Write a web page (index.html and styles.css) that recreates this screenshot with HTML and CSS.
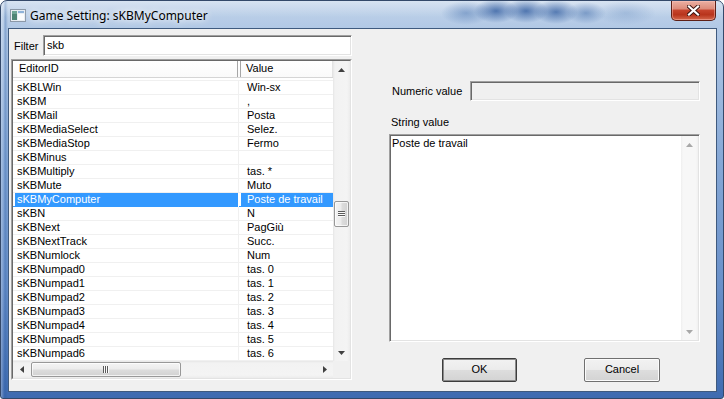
FILE: index.html
```html
<!DOCTYPE html>
<html>
<head>
<meta charset="utf-8">
<link rel="stylesheet" href="styles.css">
</head>
<body>
<div class="window">
  <div class="titlebar">
    <svg class="appicon" width="16" height="13" viewBox="0 0 16 13">
      <rect x="0.5" y="0.5" width="15" height="12" fill="#e8edf3" stroke="#8b98a8"/>
      <rect x="2" y="2" width="5" height="9" fill="#4f8576"/>
      <rect x="2" y="2" width="5" height="3" fill="#6fa596"/>
      <rect x="8" y="2" width="6" height="2" fill="#8fb3d9"/>
      <rect x="8" y="5" width="6" height="6" fill="#fbfcfd"/>
    </svg>
    <span class="title">Game Setting: sKBMyComputer</span>
    <div class="close">
      <svg width="13" height="11" viewBox="0 0 13 11">
        <path d="M2 1.5 L11 9.5 M11 1.5 L2 9.5" stroke="#3a1410" stroke-width="4" stroke-linecap="square" fill="none"/>
        <path d="M2 1.5 L11 9.5 M11 1.5 L2 9.5" stroke="#ffffff" stroke-width="2.2" stroke-linecap="square" fill="none"/>
      </svg>
    </div>
  </div>
  <div class="frame-body">
    <div class="client">
      <div class="left">
        <div class="filter-row">
          <span class="filter-label">Filter</span>
          <div class="field">skb</div>
        </div>
        <div class="list">
          <div class="list-inner">
            <div class="list-main">
              <div class="header">
                <div class="hcell h1">EditorID</div>
                <div class="hcell h2">Value</div>
              </div>
              <div class="rows">
                <div class="row"><div class="c1">sKBLWin</div><div class="sep"></div><div class="c2">Win-sx</div></div>
                <div class="row"><div class="c1">sKBM</div><div class="sep"></div><div class="c2">,</div></div>
                <div class="row"><div class="c1">sKBMail</div><div class="sep"></div><div class="c2">Posta</div></div>
                <div class="row"><div class="c1">sKBMediaSelect</div><div class="sep"></div><div class="c2">Selez.</div></div>
                <div class="row"><div class="c1">sKBMediaStop</div><div class="sep"></div><div class="c2">Fermo</div></div>
                <div class="row"><div class="c1">sKBMinus</div><div class="sep"></div><div class="c2"></div></div>
                <div class="row"><div class="c1">sKBMultiply</div><div class="sep"></div><div class="c2">tas. *</div></div>
                <div class="row"><div class="c1">sKBMute</div><div class="sep"></div><div class="c2">Muto</div></div>
                <div class="row selected"><div class="c1">sKBMyComputer</div><div class="sep"></div><div class="c2">Poste de travail</div></div>
                <div class="row"><div class="c1">sKBN</div><div class="sep"></div><div class="c2">N</div></div>
                <div class="row"><div class="c1">sKBNext</div><div class="sep"></div><div class="c2">PagGiù</div></div>
                <div class="row"><div class="c1">sKBNextTrack</div><div class="sep"></div><div class="c2">Succ.</div></div>
                <div class="row"><div class="c1">sKBNumlock</div><div class="sep"></div><div class="c2">Num</div></div>
                <div class="row"><div class="c1">sKBNumpad0</div><div class="sep"></div><div class="c2">tas. 0</div></div>
                <div class="row"><div class="c1">sKBNumpad1</div><div class="sep"></div><div class="c2">tas. 1</div></div>
                <div class="row"><div class="c1">sKBNumpad2</div><div class="sep"></div><div class="c2">tas. 2</div></div>
                <div class="row"><div class="c1">sKBNumpad3</div><div class="sep"></div><div class="c2">tas. 3</div></div>
                <div class="row"><div class="c1">sKBNumpad4</div><div class="sep"></div><div class="c2">tas. 4</div></div>
                <div class="row"><div class="c1">sKBNumpad5</div><div class="sep"></div><div class="c2">tas. 5</div></div>
                <div class="row"><div class="c1">sKBNumpad6</div><div class="sep"></div><div class="c2">tas. 6</div></div>
              </div>
            </div>
            <div class="vscroll">
              <div class="sbtn"><svg width="7" height="4" viewBox="0 0 7 4"><polygon points="0,4 3.5,0 7,4" fill="#404040"/></svg></div>
              <div class="vspace"></div>
              <div class="vthumb">
                <svg width="7" height="6" viewBox="0 0 7 6">
                  <rect x="0" y="0" width="7" height="1" fill="#5a5a5a"/><rect x="0" y="1" width="7" height="1" fill="#fafafa"/>
                  <rect x="0" y="2" width="7" height="1" fill="#5a5a5a"/><rect x="0" y="3" width="7" height="1" fill="#fafafa"/>
                  <rect x="0" y="4" width="7" height="1" fill="#5a5a5a"/><rect x="0" y="5" width="7" height="1" fill="#fafafa"/>
                </svg>
              </div>
              <div class="vfill"></div>
              <div class="sbtn"><svg width="7" height="4" viewBox="0 0 7 4"><polygon points="0,0 7,0 3.5,4" fill="#404040"/></svg></div>
            </div>
            <div class="hscroll">
              <div class="sbtn"><svg width="4" height="7" viewBox="0 0 4 7"><polygon points="4,0 4,7 0,3.5" fill="#404040"/></svg></div>
              <div class="hthumb">
                <svg width="6" height="7" viewBox="0 0 6 7">
                  <rect x="0" y="0" width="1" height="7" fill="#5a5a5a"/><rect x="1" y="0" width="1" height="7" fill="#fafafa"/>
                  <rect x="2" y="0" width="1" height="7" fill="#5a5a5a"/><rect x="3" y="0" width="1" height="7" fill="#fafafa"/>
                  <rect x="4" y="0" width="1" height="7" fill="#5a5a5a"/><rect x="5" y="0" width="1" height="7" fill="#fafafa"/>
                </svg>
              </div>
              <div class="hfill"></div>
              <div class="sbtn"><svg width="4" height="7" viewBox="0 0 4 7"><polygon points="0,0 4,3.5 0,7" fill="#404040"/></svg></div>
            </div>
            <div class="corner"></div>
          </div>
        </div>
      </div>
      <div class="right">
        <div class="num-row">
          <span class="num-label">Numeric value</span>
          <div class="field disabled"></div>
        </div>
        <div class="str-label">String value</div>
        <div class="textarea">
          <div class="ta-text">Poste de travail</div>
          <div class="ta-scroll">
            <div class="sbtn"><svg width="7" height="4" viewBox="0 0 7 4"><polygon points="0,4 3.5,0 7,4" fill="#a8a8a8"/></svg></div>
            <div class="vfill"></div>
            <div class="sbtn"><svg width="7" height="4" viewBox="0 0 7 4"><polygon points="0,0 7,0 3.5,4" fill="#a8a8a8"/></svg></div>
          </div>
        </div>
        <div class="buttons">
          <div class="btn ok">OK</div>
          <div class="btn cancel">Cancel</div>
        </div>
      </div>
    </div>
  </div>
</div>
</body>
</html>
```

FILE: styles.css
```css
html, body {
  margin: 0;
  padding: 0;
}
body {
  width: 724px;
  height: 399px;
  overflow: hidden;
  background: #ffffff;
  font-family: "Liberation Sans", Arial, sans-serif;
  font-size: 11px;
  color: #000;
}
.window {
  box-sizing: border-box;
  width: 724px;
  height: 399px;
  border: 1px solid #34496a;
  border-radius: 7px 7px 3px 3px;
  overflow: hidden;
  display: flex;
  flex-direction: column;
  background:
    linear-gradient(to right, rgba(255,255,255,0.3), rgba(255,255,255,0) 3px, rgba(40,90,160,0.35) 4px, rgba(40,90,160,0) 7px),
    linear-gradient(to bottom, #c2d4ea 0px, #b1c8e5 28px, #86a8d6 40%, #6990c9 72%, #3f6bb0 100%);
}
.titlebar {
  height: 27px;
  flex: none;
  display: flex;
  align-items: flex-start;
  padding: 0 7px 0 9px;
  background:
    radial-gradient(ellipse 22px 12px at 495px 10px, rgba(40,85,155,0.75), rgba(40,85,155,0)),
    radial-gradient(ellipse 22px 12px at 525px 10px, rgba(40,85,155,0.75), rgba(40,85,155,0)),
    radial-gradient(ellipse 22px 12px at 555px 11px, rgba(40,85,155,0.7), rgba(40,85,155,0)),
    radial-gradient(ellipse 20px 11px at 585px 12px, rgba(55,100,165,0.5), rgba(55,100,165,0)),
    radial-gradient(ellipse 25px 12px at 465px 12px, rgba(60,105,170,0.45), rgba(60,105,170,0)),
    radial-gradient(ellipse 30px 12px at 625px 12px, rgba(90,130,185,0.3), rgba(90,130,185,0)),
    linear-gradient(to bottom, rgba(255,255,255,0.35), rgba(255,255,255,0) 60%);
}
.appicon {
  margin-top: 8px;
  flex: none;
}
.title {
  margin-left: 4px;
  margin-top: 6px;
  font-family: "Noto Sans", "Open Sans", sans-serif;
  font-size: 12px;
  line-height: 17px;
  color: #000;
  text-shadow: 0 0 6px #fff, 0 0 10px rgba(255,255,255,0.9);
}
.close {
  margin-left: auto;
  width: 45px;
  height: 20px;
  box-sizing: border-box;
  border: 1px solid #5d1f16;
  border-top: none;
  border-radius: 0 0 5px 5px;
  background: linear-gradient(to bottom, #ebb0a3 0%, #dd8c7b 40%, #c5432c 50%, #b8341c 72%, #d4674c 100%);
  box-shadow: inset 0 0 0 1px rgba(255,200,190,0.45);
  display: flex;
  align-items: center;
  justify-content: center;
}
.frame-body {
  flex: 1;
  display: flex;
  padding: 0 6px 6px 7px;
}
.client {
  flex: 1;
  display: flex;
  border: 1px solid #3f5a7e;
  background: #f0f0f0;
}
.left {
  width: 341px;
  margin-left: 2px;
  padding-top: 6px;
  display: flex;
  flex-direction: column;
}
.filter-row {
  display: flex;
  align-items: center;
  height: 21px;
}
.filter-label {
  width: 29px;
  padding-left: 3px;
}
.field {
  box-sizing: border-box;
  flex: 1;
  height: 21px;
  background: #fff;
  border: 1px solid;
  border-color: #a0a0a0 #ffffff #ffffff #a0a0a0;
  box-shadow: inset 1px 1px 0 #696969, inset -1px -1px 0 #e3e3e3;
  padding: 3px 0 0 3px;
  line-height: 13px;
}
.field.disabled {
  background: #f0f0f0;
  height: 20px;
}
.list {
  margin-top: 3px;
  box-sizing: border-box;
  height: 321px;
  border: 1px solid;
  border-color: #a0a0a0 #ffffff #ffffff #a0a0a0;
}
.list-inner {
  box-sizing: border-box;
  height: 100%;
  border: 1px solid;
  border-color: #696969 #e3e3e3 #e3e3e3 #696969;
  background: #fff;
  display: grid;
  grid-template-columns: 320px 17px;
  grid-template-rows: 300px 17px;
}
.list-main {
  overflow: hidden;
  background: #fff;
}
.header {
  display: flex;
  height: 17px;
  box-sizing: border-box;
  border-bottom: 1px solid #d5d5d5;
  background: linear-gradient(#ffffff, #fafafa);
}
.hcell {
  box-sizing: border-box;
  height: 16px;
  line-height: 15px;
}
.h1 {
  width: 225px;
  padding-left: 6px;
  border-right: 1px solid #a6a6a6;
}
.h2 {
  margin-left: 2px;
  width: 93px;
  padding-left: 5px;
  border-left: 1px solid #a6a6a6;
  border-right: 1px solid #e3e3e3;
}
.rows {
  margin-top: 2px;
  border-top: 1px solid #f0f0f0;
}
.row {
  display: flex;
  height: 14px;
  box-sizing: border-box;
  border-bottom: 1px solid #f0f0f0;
}
.c1, .c2 {
  height: 13px;
  line-height: 13px;
  white-space: nowrap;
  overflow: hidden;
}
.c1 {
  width: 223px;
  margin-left: 2px;
  padding-left: 2px;
  box-sizing: border-box;
}
.sep {
  width: 1px;
  height: 14px;
  background: #f0f0f0;
  flex: none;
}
.c2 {
  width: 92px;
  margin-left: 2px;
  padding-left: 6px;
  box-sizing: border-box;
}
.row.selected {
  border-bottom-color: #3399ff;
}
.row.selected .c1,
.row.selected .c2 {
  background: #3399ff;
  color: #fff;
  height: 14px;
}
.row.selected .sep {
  background: #ffffff;
}
.sbtn {
  width: 17px;
  height: 17px;
  flex: none;
  display: flex;
  align-items: center;
  justify-content: center;
}
.vscroll {
  display: flex;
  flex-direction: column;
  background: linear-gradient(to right, #e6e6e6 0, #f2f2f2 2px, #f4f4f4 14px, #ececec 17px);
}
.vspace {
  height: 123px;
  flex: none;
}
.vthumb {
  box-sizing: border-box;
  margin-left: 1px;
  width: 15px;
  height: 26px;
  border: 1px solid #989898;
  border-radius: 2px;
  background: linear-gradient(to right, #f4f4f4 0%, #ececec 45%, #dcdcdc 55%, #d2d2d2 100%);
  box-shadow: inset 0 0 0 1px rgba(255,255,255,0.7);
  display: flex;
  align-items: center;
  justify-content: center;
}
.vfill {
  flex: 1;
}
.hscroll {
  display: flex;
  background: linear-gradient(to bottom, #e6e6e6 0, #f2f2f2 2px, #f4f4f4 14px, #ececec 17px);
}
.hthumb {
  box-sizing: border-box;
  margin-top: 1px;
  margin-left: 1px;
  width: 150px;
  height: 15px;
  border: 1px solid #989898;
  border-radius: 2px;
  background: linear-gradient(to bottom, #f4f4f4 0%, #ececec 45%, #dcdcdc 55%, #d2d2d2 100%);
  box-shadow: inset 0 0 0 1px rgba(255,255,255,0.7);
  display: flex;
  align-items: center;
  justify-content: center;
}
.hfill {
  flex: 1;
}
.corner {
  background: #f0f0f0;
}
.right {
  margin-left: 37px;
  width: 311px;
  padding-top: 52px;
  display: flex;
  flex-direction: column;
}
.num-row {
  display: flex;
  align-items: center;
  height: 20px;
}
.num-label {
  width: 78px;
  padding-left: 3px;
}
.str-label {
  margin-top: 15px;
  padding-left: 2px;
  height: 13px;
  line-height: 13px;
}
.textarea {
  margin-top: 5px;
  box-sizing: border-box;
  height: 208px;
  background: #fff;
  border: 1px solid;
  border-color: #a0a0a0 #ffffff #ffffff #a0a0a0;
  box-shadow: inset 1px 1px 0 #696969, inset -1px -1px 0 #e3e3e3;
  padding: 1px;
  display: flex;
}
.ta-text {
  flex: 1;
  padding: 1px 0 0 1px;
  line-height: 13px;
}
.ta-scroll {
  width: 17px;
  display: flex;
  flex-direction: column;
  background: linear-gradient(to right, #eeeeee 0, #f7f7f7 2px, #f7f7f7 15px, #f0f0f0 17px);
}
.buttons {
  display: flex;
  margin-top: 16px;
}
.btn {
  box-sizing: border-box;
  height: 24px;
  line-height: 21px;
  text-align: center;
  border: 1px solid #707070;
  border-radius: 2px;
  background: linear-gradient(to bottom, #f2f2f2 0%, #ebebeb 50%, #dddddd 51%, #d3d3d3 100%);
  box-shadow: inset 0 0 0 1px #fbfbfb;
}
.ok {
  margin-left: 53px;
  width: 75px;
  border-color: #3c3c3c;
  box-shadow: inset 0 0 0 1px #8a8a8a;
}
.cancel {
  margin-left: 67px;
  width: 76px;
}
```
